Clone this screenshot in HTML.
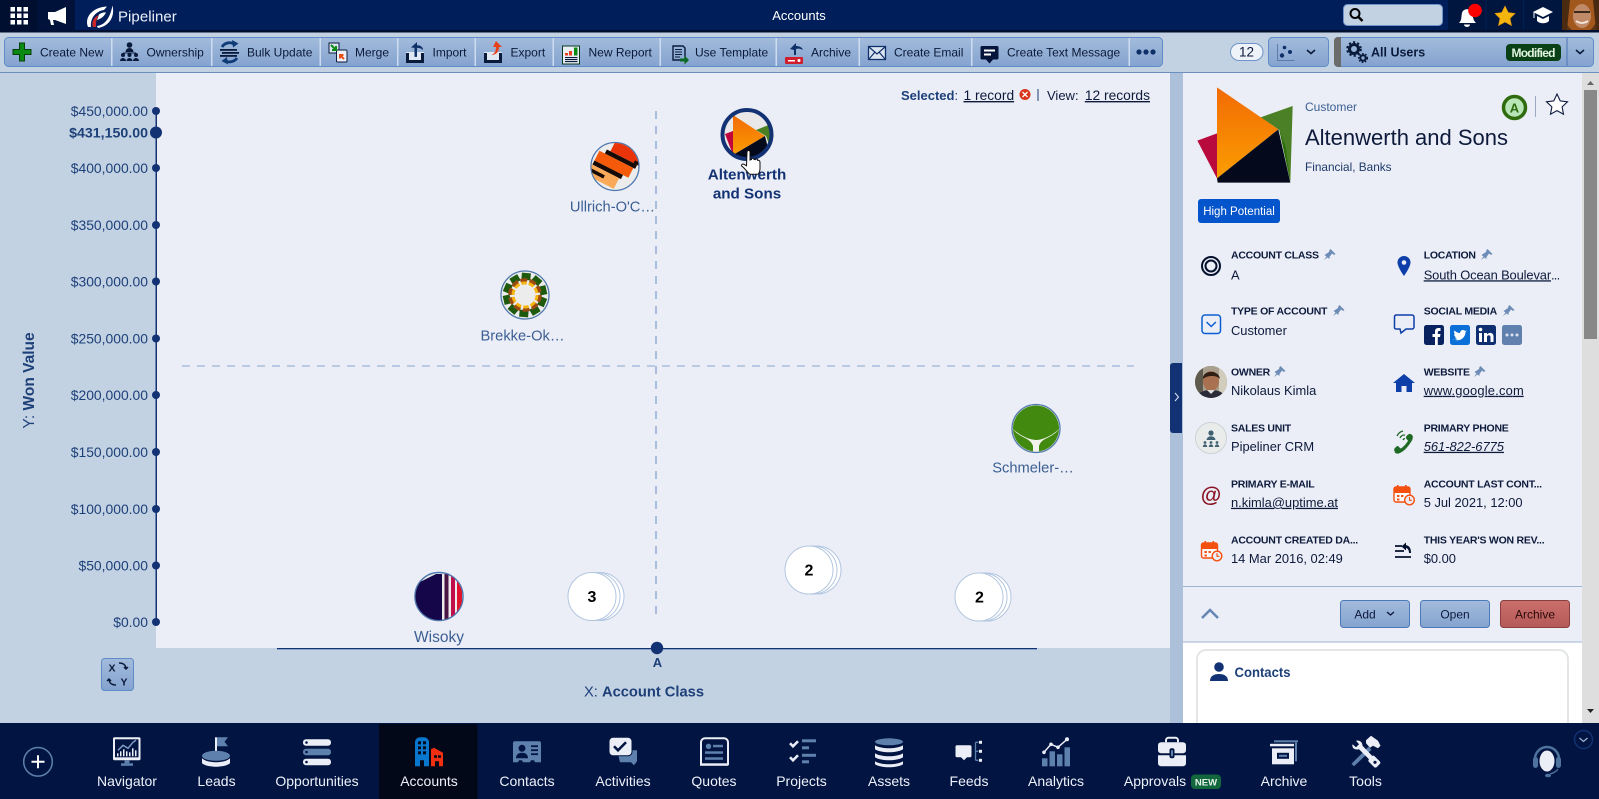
<!DOCTYPE html>
<html lang="en"><head><meta charset="utf-8"><title>Accounts</title>
<style>
html,body{margin:0;padding:0;width:1599px;height:799px;overflow:hidden;background:#c3d2e3}
svg{display:block;font-family:"Liberation Sans",Arial,sans-serif}
.tb{font-size:12px;fill:#0b1a38}
.ax{font-size:13.9px;fill:#1d4079;text-anchor:end}
.bl{font-size:14.7px;fill:#3c5f94;text-anchor:middle}
.lb{font-size:10.5px;font-weight:bold;fill:#0d1a3c;letter-spacing:-.25px}
.vl{font-size:12.9px;fill:#0d1a3c}
.nv{font-size:14px;fill:#edf1f9;text-anchor:middle}
.w{fill:#ebeef6}.b{fill:#5e80ad}.d{fill:#021441}
</style></head><body>
<svg width="1599" height="799" viewBox="0 0 1599 799" xmlns="http://www.w3.org/2000/svg">
<defs>
<linearGradient id="g" x1="0" y1="0" x2="0" y2="1"><stop offset="0" stop-color="#a3bbdc"/><stop offset="1" stop-color="#84a3cf"/></linearGradient>
<linearGradient id="r" x1="0" y1="0" x2="0" y2="1"><stop offset="0" stop-color="#cb6f6c"/><stop offset="1" stop-color="#b45a58"/></linearGradient>
<linearGradient id="o" x1="0" y1="0" x2="0" y2="1"><stop offset="0" stop-color="#f26a05"/><stop offset="1" stop-color="#fb9e00"/></linearGradient>
<g id="pin"><path d="M3 -5 L8 0 L6.500 1 L4.500 -.5 L2 3 L2 5 L0 3.500 L-3.500 6 L-1 2.500 L-3 1 L-1.500 0 L1.500 -2 L2 -4Z" fill="#6d8cb7"/></g>
<g id="cal"><rect x="0" y="2" width="16" height="15" rx="2" fill="#fbfbfb" stroke="#f4500f" stroke-width="1.400"/><rect x="0" y="2" width="16" height="6" fill="#f4500f"/><rect x="3" y="0" width="1.600" height="4" fill="#f4500f"/><rect x="11" y="0" width="1.600" height="4" fill="#f4500f"/><rect x="3" y="10" width="2.400" height="2" fill="#f4500f"/><rect x="7" y="10" width="2.400" height="2" fill="#f4500f"/><rect x="3" y="13.500" width="2.400" height="2" fill="#f4500f"/><circle cx="15.500" cy="15" r="4.800" fill="#ebeef6" stroke="#f4500f" stroke-width="1.400"/><path d="M15.500 12v3.300h2.400" fill="none" stroke="#f4500f" stroke-width="1.100"/></g>
<clipPath id="c1"><circle cx="747" cy="134.500" r="24"/></clipPath>
<clipPath id="c2"><circle cx="615" cy="166.500" r="23.500"/></clipPath>
<clipPath id="c3"><circle cx="439" cy="596.500" r="23.500"/></clipPath>
<clipPath id="c4"><circle cx="1036" cy="428.500" r="23"/></clipPath>
<clipPath id="c5"><circle cx="1211" cy="382" r="16"/></clipPath>
<clipPath id="c6"><rect x="1562" y="0" width="37" height="30"/></clipPath>
</defs>

<!-- backgrounds -->
<rect width="1599" height="799" fill="#c3d2e3"/>
<rect x="156" y="73" width="1014" height="575" fill="#ebeef6"/>
<rect x="1170" y="73" width="13" height="650" fill="#adc0d9"/>
<rect x="1183" y="73" width="399" height="569" fill="#ebeef6"/>
<rect x="1183" y="642" width="399" height="81" fill="#fff"/>
<rect x="1582" y="73" width="17" height="650" fill="#dedede"/>
<rect x="1584" y="90" width="13" height="249" fill="#888"/>
<path d="M1587 85l3.500-4 3.500 4z" fill="#666"/><path d="M1587 709l3.500 4 3.500-4z" fill="#222"/>

<!-- top bar -->
<rect width="1599" height="31" fill="#001e5a"/><rect y="30" width="1599" height="2.500" fill="#01102e"/>
<rect width="75" height="31" fill="#00123a"/><rect width="37" height="31" fill="#000f30"/>
<g fill="#fff"><rect x="10.500" y="7" width="4.500" height="4.500"/><rect x="17" y="7" width="4.500" height="4.500"/><rect x="23.500" y="7" width="4.500" height="4.500"/><rect x="10.500" y="13.500" width="4.500" height="4.500"/><rect x="17" y="13.500" width="4.500" height="4.500"/><rect x="23.500" y="13.500" width="4.500" height="4.500"/><rect x="10.500" y="20" width="4.500" height="4.500"/><rect x="17" y="20" width="4.500" height="4.500"/><rect x="23.500" y="20" width="4.500" height="4.500"/></g>
<path d="M48 12 L55 12 L66 7 V24 L55 20 L53 20 L54 25 L51 25 L50 20 L48 19Z" fill="#fff"/>
<path d="M88 27C84 17 93 7 107 6.500L104 10C96 11 90 18 91 27Z" fill="#fff"/>
<path d="M97 26C105 25 110 18 112.500 5.500C115 16 110 26 98 28Z" fill="#fff"/>
<path d="M97 20C100 19 104 17 106 12.500C104 12 101 13 99 14.500Z" fill="#fff"/>
<path d="M93 27C91 22 94 17 99 15C96 19 96 23 96 27Z" fill="#c8262a"/>
<text x="118" y="21.500" font-size="15" letter-spacing=".05" fill="#eef2fa">Pipeliner</text>
<text x="799" y="20" font-size="13" fill="#fff" text-anchor="middle">Accounts</text>
<rect x="1343.500" y="4.500" width="99" height="21" rx="4" fill="#c3d2e3" stroke="#6f94c9"/>
<circle cx="1355" cy="13.500" r="4.500" fill="none" stroke="#000" stroke-width="2"/><path d="M1358.500 17l4 4" stroke="#000" stroke-width="2.500"/>
<rect x="1448" width="151" height="30" fill="#00163f"/><rect x="1485.500" width="1" height="30" fill="#012055"/><rect x="1523" width="1" height="30" fill="#012055"/>
<path d="M1459 23 C1462 20 1461 17 1462 13 C1463 8 1471 8 1472 13 C1473 17 1473 20 1476 23Z" fill="#fff"/><path d="M1464 24.500h6a3 2.500 0 0 1-6 0z" fill="#fff"/>
<circle cx="1475" cy="10.500" r="6.800" fill="#f00"/>
<path d="M1505 6 L1508.200 12.500 L1515 13.500 L1510 18.400 L1511.500 25.500 L1505 22 L1498.500 25.500 L1500 18.400 L1495 13.500 L1501.800 12.500Z" fill="#f6b40e" stroke="#e39a0a" stroke-width=".6"/>
<path d="M1543 7 L1553 12 L1543 17 L1533 12Z M1537 16 L1543 19 L1549 16 V21 C1546 24 1540 24 1537 21Z" fill="#fff"/><rect x="1533.500" y="12" width="1" height="6" fill="#fff"/>
<g clip-path="url(#c6)"><rect x="1562" width="37" height="30" fill="#5a3416"/><ellipse cx="1581" cy="13" rx="17" ry="20" fill="#a2581c"/><ellipse cx="1582" cy="16" rx="9" ry="12" fill="#c08a68"/><path d="M1574 12h6M1584 12h6M1580 12h4" stroke="#2a1a10" stroke-width="1.800"/><path d="M1576 21q6 4 12 0" stroke="#f4e6dc" stroke-width="1.800" fill="none"/><path d="M1562 0h8l-3 30h-5zM1593 0h6v30h-3z" fill="#4a2a10"/></g>

<!-- toolbar -->
<rect y="72" width="1599" height="1" fill="#6d8fbf"/>
<rect x="4.500" y="37.500" width="1158" height="29" rx="4" fill="url(#g)" stroke="#5f8cc6"/>
<g fill="#cddcef"><rect x="111" y="38" width="1.500" height="28"/><rect x="211" y="38" width="1.500" height="28"/><rect x="319.500" y="38" width="1.500" height="28"/><rect x="397" y="38" width="1.500" height="28"/><rect x="474.500" y="38" width="1.500" height="28"/><rect x="552.500" y="38" width="1.500" height="28"/><rect x="659.500" y="38" width="1.500" height="28"/><rect x="775.500" y="38" width="1.500" height="28"/><rect x="858.500" y="38" width="1.500" height="28"/><rect x="971" y="38" width="1.500" height="28"/><rect x="1128.500" y="38" width="1.500" height="28"/></g>
<g class="tb">
<text class="tb" x="40" y="56.500">Create New</text><text class="tb" x="146.500" y="56.500">Ownership</text><text class="tb" x="247" y="56.500">Bulk Update</text><text class="tb" x="355" y="56.500">Merge</text><text class="tb" x="432.500" y="56.500">Import</text><text class="tb" x="510.500" y="56.500">Export</text><text class="tb" x="588.500" y="56.500">New Report</text><text class="tb" x="695" y="56.500">Use Template</text><text class="tb" x="811" y="56.500">Archive</text><text class="tb" x="894" y="56.500">Create Email</text><text class="tb" x="1007" y="56.500">Create Text Message</text>
</g>
<path d="M19.500 43h5v6.500h6.500v5h-6.500V61h-5v-6.500H13v-5h6.500z" fill="#0a8a12" stroke="#063f0a"/>
<g fill="#0a1a3a"><circle cx="129.500" cy="45" r="2.800"/><path d="M125.500 52a4 4 0 0 1 8 0z"/><circle cx="123" cy="55" r="2"/><path d="M120 61a3 3 0 0 1 6 0z"/><circle cx="129.500" cy="55" r="2"/><path d="M126.500 61a3 3 0 0 1 6 0z"/><circle cx="136" cy="55" r="2"/><path d="M133 61a3 3 0 0 1 6 0z"/><path d="M123 52.500h13v1h-13z"/></g>
<g fill="none" stroke="#0f3a78" stroke-width="2.800"><path d="M222 47c3-5 10-5.500 13-2"/><path d="M237 58c-3 4.500-10 5-13 2"/></g><path d="M232 40l6.500 3.500-5.500 4zM228 64.500l-6.500-3.500 5.500-4z" fill="#0f3a78"/><g fill="#0a1a3a"><rect x="220" y="49" width="17" height="1.800"/><rect x="222" y="52" width="17" height="1.800"/><rect x="220" y="55" width="17" height="1.800"/></g>
<rect x="329" y="43" width="10" height="10" fill="#dbe5f2" stroke="#0a1a3a"/><rect x="336.500" y="50" width="10.500" height="12" rx="1" fill="#eef2f8" stroke="#0a1a3a"/><path d="M331 45l5 5m0-4v4h-4" stroke="#0a8a12" stroke-width="2" fill="none"/><path d="M344 59l-4-4m0 3.500V55h3.500" stroke="#e8501a" stroke-width="2" fill="none"/>
<rect x="406" y="52" width="18" height="11" fill="#dfe8f3"/><path d="M406 53h3v7h12v-7h3v10h-18z" fill="#0a1a3a"/><path d="M411 47.500l6-5.500v3.200c3.500 0 6 1.500 6 5-2-2-4-2.300-6-2.300v9h-2.500v-9z" fill="#0f2f68"/>
<rect x="484" y="52" width="18" height="11" fill="#dfe8f3"/><path d="M484 53h3v7h12v-7h3v10h-18z" fill="#0a1a3a"/><path d="M496 41l6 6h-3c0 5-3 8-8 8 3-1 5-3 5-8h-3z" fill="#e8401a"/>
<rect x="562.500" y="46" width="17" height="18" fill="#e9eef5" stroke="#0a3a22"/><rect x="565" y="53" width="3" height="2.500" fill="#e8401a"/><rect x="569" y="51" width="3" height="4.500" fill="#e8401a"/><rect x="574" y="47.500" width="3.500" height="8" fill="#0a8a12"/><g fill="#0a1a3a"><rect x="565" y="57" width="12.500" height="1.100"/><rect x="565" y="59" width="12.500" height="1.100"/><rect x="565" y="61" width="12.500" height="1.100"/></g>
<path d="M673 46h10l2 2v12h-12z" fill="none" stroke="#0a1a3a" stroke-width="1.400"/><g fill="#0a1a3a"><rect x="675" y="49" width="7" height="1"/><rect x="675" y="51.500" width="7" height="1"/><rect x="675" y="54" width="7" height="1"/><rect x="675" y="56.500" width="5" height="1"/></g><path d="M680 58.500h4.500v-3l4.500 4.500-4.500 4.500v-3H680z" fill="#0a6a22"/>
<rect x="785" y="57" width="18" height="7" rx="1" fill="#d11e2c"/><rect x="788" y="60" width="7" height="1.500" fill="#fff"/><circle cx="799" cy="60.500" r="1.500" fill="#fff"/><path d="M790 49l6-6v3c3 0 6 1 7 4-2-1-4-2-7-1v6h-2v-5z" fill="#0f2f68"/>
<rect x="868.500" y="46.500" width="17" height="13" fill="#dbe5f2" stroke="#0f2f68" stroke-width="1.300"/><path d="M869 47l8 7 8-7M869 59l6-7M885 59l-6-7" fill="none" stroke="#0f2f68" stroke-width="1.200"/>
<path d="M982 46h15a1.500 1.500 0 0 1 1.500 1.500V58a1.500 1.500 0 0 1-1.500 1.500h-4l-3.500 4-3.500-4H982a1.500 1.500 0 0 1-1.500-1.500V47.500A1.500 1.500 0 0 1 982 46z" fill="#04143a"/><rect x="984" y="49.500" width="11" height="2" fill="#fff"/><rect x="984" y="53.500" width="7" height="2" fill="#fff"/>
<g fill="#0f2f68"><circle cx="1139" cy="52" r="2.600"/><circle cx="1146" cy="52" r="2.600"/><circle cx="1153" cy="52" r="2.600"/></g>
<rect x="1230.500" y="43.500" width="32.500" height="17" rx="8.500" fill="#eef3fa" stroke="#6f94c9"/><text x="1246.500" y="56.500" font-size="13.500" fill="#0d1a3c" text-anchor="middle">12</text>
<rect x="1268.500" y="37.500" width="60" height="29" rx="4" fill="url(#g)" stroke="#5f8cc6"/>
<path d="M1277.500 44v16.500h17" fill="none" stroke="#5a7cab"/><circle cx="1282" cy="55.500" r="2.200" fill="#0f2f68"/><circle cx="1284.500" cy="47.500" r="1.800" fill="#0f2f68"/><circle cx="1290" cy="52" r="2" fill="#0f2f68"/>
<path d="M1307 50l4 3.500 4-3.500" fill="none" stroke="#0a1a3a" stroke-width="1.600"/>
<rect x="1334.500" y="37.500" width="259" height="29" rx="4" fill="url(#g)" stroke="#5f8cc6"/><path d="M1341 37v30h-3a4 4 0 0 1-4-4V41a4 4 0 0 1 4-4z" fill="#6b6b6b"/><rect x="1566.500" y="38" width="1" height="28" fill="#4a76b5"/>
<circle cx="1354" cy="49" r="4.500" fill="none" stroke="#0a1a3a" stroke-width="3"/><circle cx="1354" cy="49" r="6.800" fill="none" stroke="#0a1a3a" stroke-width="2" stroke-dasharray="2.200 2.200"/>
<circle cx="1363" cy="58" r="2.700" fill="none" stroke="#0a1a3a" stroke-width="2"/><circle cx="1363" cy="58" r="4.300" fill="none" stroke="#0a1a3a" stroke-width="1.500" stroke-dasharray="1.600 1.600"/>
<text x="1371" y="56.500" font-size="12.500" font-weight="bold" fill="#0a1a3a">All Users</text>
<rect x="1506" y="44" width="55" height="17" rx="4" fill="#0a4016"/><text x="1533.500" y="56.800" font-size="12" font-weight="bold" fill="#dff3df" text-anchor="middle" textLength="44">Modified</text>
<path d="M1576 50l4 3.500 4-3.500" fill="none" stroke="#0a1a3a" stroke-width="1.600"/>

<!-- axis -->
<rect x="155.500" y="111" width="1.500" height="511" fill="#123274"/>
<g fill="#123274"><circle cx="156" cy="111" r="4"/><circle cx="156" cy="132.500" r="6"/><circle cx="156" cy="168" r="4"/><circle cx="156" cy="225" r="4"/><circle cx="156" cy="281.500" r="4"/><circle cx="156" cy="338.500" r="4"/><circle cx="156" cy="395" r="4"/><circle cx="156" cy="452" r="4"/><circle cx="156" cy="509" r="4"/><circle cx="156" cy="565.500" r="4"/><circle cx="156" cy="622" r="4"/></g>
<text class="ax" x="148" y="116">$450,000.00</text>
<text x="148" y="137.500" font-size="14.200" font-weight="bold" fill="#1d4079" text-anchor="end">$431,150.00</text>
<text class="ax" x="148" y="173">$400,000.00</text><text class="ax" x="148" y="230">$350,000.00</text><text class="ax" x="148" y="286.500">$300,000.00</text><text class="ax" x="148" y="343.500">$250,000.00</text><text class="ax" x="148" y="400">$200,000.00</text><text class="ax" x="148" y="457">$150,000.00</text><text class="ax" x="148" y="514">$100,000.00</text><text class="ax" x="148" y="570.500">$50,000.00</text><text class="ax" x="148" y="627">$0.00</text>
<text transform="translate(34 380.500) rotate(-90)" font-size="15.500" fill="#1d4079" text-anchor="middle">Y: <tspan font-weight="bold">Won Value</tspan></text>
<path d="M656 111V620" stroke="#a9bedd" stroke-width="2" stroke-dasharray="8 7"/>
<path d="M182 366H1134" stroke="#a9bedd" stroke-width="1.500" stroke-dasharray="8 7"/>
<rect x="277" y="648" width="760" height="1.300" fill="#123274"/><circle cx="657" cy="648" r="6.200" fill="#123274"/>
<text x="657.500" y="667" font-size="13" font-weight="bold" fill="#1d4079" text-anchor="middle">A</text>
<text x="584" y="696.500" font-size="14.700" fill="#1d4079">X: <tspan font-weight="bold">Account Class</tspan></text>
<rect x="101.500" y="658.500" width="32" height="32" rx="3" fill="url(#g)" stroke="#5f8cc6"/>
<text x="112" y="671.500" font-size="10.500" font-weight="bold" fill="#0a1a3a" text-anchor="middle">X</text><text x="124" y="685.500" font-size="10.500" font-weight="bold" fill="#0a1a3a" text-anchor="middle">Y</text>
<path d="M119 663c4 0 7 2 7 6m-2-2l2 2 2-2M116 685c-4 0-7-2-7-6m2 2l-2-2-2 2" fill="none" stroke="#0a1a3a" stroke-width="1.500"/>

<!-- selected -->
<text x="901" y="100" font-size="13" fill="#1d4079"><tspan font-weight="bold">Selected</tspan>: </text>
<text x="963.500" y="100" font-size="13.800" fill="#0d1a3c" text-decoration="underline">1 record</text>
<circle cx="1025" cy="94.500" r="5.500" fill="#d9341c"/><path d="M1022.500 92l5 5m0-5l-5 5" stroke="#fff" stroke-width="1.300"/>
<rect x="1037.500" y="89" width="1" height="12" fill="#1d4079"/>
<text x="1047" y="100" font-size="13" fill="#0d1a3c">View:</text>
<text x="1150" y="100" font-size="13.800" fill="#0d1a3c" text-decoration="underline" text-anchor="end">12 records</text>

<!-- bubbles -->
<circle cx="615" cy="166.500" r="24" fill="#ececec" stroke="#4f78ae" stroke-width="1.300"/>
<g clip-path="url(#c2)"><g transform="rotate(27 615 166.500)">
<rect x="604" y="143" width="32" height="12" fill="#e9340a"/>
<rect x="600" y="155" width="34" height="4.500" fill="#150a06"/>
<rect x="594" y="159.500" width="38" height="11" fill="#f45a0a"/>
<rect x="594" y="170.500" width="32" height="4.500" fill="#150a06"/>
<rect x="590" y="175" width="34" height="12" fill="#f9a957"/>
<rect x="594" y="179" width="16" height="3.500" fill="#150a06"/>
<rect x="630" y="152" width="8" height="3" fill="#150a06"/>
</g></g>
<text class="bl" x="612.500" y="211.500">Ullrich-O'C…</text>
<circle cx="747" cy="134.500" r="24" fill="#e8e8e8"/>
<g clip-path="url(#c1)"><path d="M733 115L765 136 733 155z" fill="url(#o)"/><path d="M725 134L733 131V155z" fill="#c0063c"/><path d="M756 130L771 124V150L766 136z" fill="#4a7f22"/><path d="M765 136L771 160H733V155z" fill="#040a1c"/></g>
<circle cx="747" cy="134.500" r="24.500" fill="none" stroke="#123274" stroke-width="4"/>
<text x="747" y="179.500" font-size="15.200" font-weight="bold" fill="#123274" text-anchor="middle">Altenwerth</text>
<text x="747" y="198.500" font-size="15.200" font-weight="bold" fill="#123274" text-anchor="middle">and Sons</text>
<path d="M747 152a1.500 1.500 0 0 1 3 0v8l1.500-.5v-.5a1.300 1.300 0 0 1 2.500.5l1.300.2a1.200 1.200 0 0 1 2.300.6c2-.5 2.500 1 2.400 3v5c0 3-1 5-2 6h-8c-2-1-5-6-8-8-1-1 0-3 2-2l2.500 1.500z" fill="#fff" stroke="#111" stroke-width="1"/>
<circle cx="525" cy="295" r="24" fill="#ececec" stroke="#4f78ae" stroke-width="1.300"/>
<g transform="translate(525 295)">
<g fill="#1e5a0e"><rect x="-5" y="-22" width="9" height="7" transform="rotate(5)"/><rect x="-5" y="-22" width="9" height="7" transform="rotate(41)"/><rect x="-5" y="-22" width="9" height="7" transform="rotate(77)"/><rect x="-5" y="-22" width="9" height="7" transform="rotate(113)"/><rect x="-5" y="-22" width="9" height="7" transform="rotate(149)"/><rect x="-5" y="-22" width="9" height="7" transform="rotate(185)"/><rect x="-5" y="-22" width="9" height="7" transform="rotate(221)"/><rect x="-5" y="-22" width="9" height="7" transform="rotate(257)"/><rect x="-5" y="-22" width="9" height="7" transform="rotate(293)"/><rect x="-5" y="-22" width="9" height="7" transform="rotate(329)"/></g>
<circle r="15" fill="none" stroke="#9c4a14" stroke-width="3.500" stroke-dasharray="7 2.400"/><circle r="12" fill="none" stroke="#f6b40e" stroke-width="3" stroke-dasharray="5.500 2"/><circle r="10.500" fill="#ececec"/>
</g>
<text class="bl" x="522.500" y="340.500">Brekke-Ok…</text>
<circle cx="1036" cy="428.500" r="24" fill="#ececec" stroke="#4f78ae" stroke-width="1.300"/>
<g clip-path="url(#c4)"><rect x="1010" y="404" width="52" height="50" fill="#42890f"/><path d="M1012 428C1020 439 1030 437 1033 446V454H1039V446C1042 437 1052 439 1060 428C1052 436 1042 440 1036 440C1030 440 1020 436 1012 428Z" fill="#f1f3ec"/></g>
<text class="bl" x="1033" y="472.500">Schmeler-…</text>
<circle cx="439" cy="596.500" r="24" fill="#ececec" stroke="#4f78ae" stroke-width="1.500"/>
<g clip-path="url(#c3)"><path d="M414 585l22-11 6 0v46h-28z" fill="#15064a"/><rect x="444.500" y="574" width="4" height="46" fill="#4a1545"/><rect x="451" y="576" width="4" height="44" fill="#c00f4a"/><rect x="457" y="580" width="5" height="40" fill="#e0132e"/></g>
<text class="bl" x="439" y="642" font-size="15.500" style="font-size:15.500px">Wisoky</text>
<g fill="#fff" stroke="#b3c6e0" stroke-width="1"><circle cx="600" cy="596.500" r="24"/><circle cx="596" cy="596.500" r="24"/><circle cx="592" cy="596.500" r="24"/><circle cx="817" cy="570" r="24"/><circle cx="813" cy="570" r="24"/><circle cx="809" cy="570" r="24"/><circle cx="987" cy="597" r="24"/><circle cx="983" cy="597" r="24"/><circle cx="979" cy="597" r="24"/></g>
<g font-size="16" font-weight="bold" fill="#000" text-anchor="middle"><text x="592" y="602">3</text><text x="809" y="575.500">2</text><text x="979.500" y="602.500">2</text></g>

<!-- panel header -->
<svg x="1120" y="0" width="479" height="240" viewBox="0 0 1437 720">
<path d="M232 422L291 400V535Z" fill="#b80a3c"/><path d="M422 352L518 318 511 545 478 390Z" fill="#4b8026"/><path d="M478 390L511 545 497 440Z" fill="#2f6d0a"/><path d="M291 262L475 388 291 535Z" fill="url(#o)"/><path d="M475 388L511 548H293L291 535Z" fill="#040a1c"/>
</svg>
<text x="1305" y="111" font-size="12" fill="#3c5f94">Customer</text>
<text x="1305" y="145" font-size="22" fill="#0d1a3c">Altenwerth and Sons</text>
<text x="1305" y="171" font-size="11.800" fill="#1d3a6b">Financial, Banks</text>
<rect x="1198" y="199" width="82" height="24" rx="3" fill="#0454cb"/><text x="1239" y="215" font-size="11.500" fill="#fff" text-anchor="middle">High Potential</text>
<circle cx="1514.500" cy="107.500" r="11" fill="#b9e6b8" stroke="#2f6b0f" stroke-width="3.500"/><text x="1514.500" y="112.500" font-size="13" font-weight="bold" fill="#2f6b0f" text-anchor="middle">A</text>
<rect x="1535" y="96" width="1" height="21" fill="#9aa9bf"/>
<path d="M1557 94l3.200 6.900 7.300.9-5.400 5.100 1.400 7.300-6.500-3.600-6.500 3.600 1.400-7.300-5.400-5.100 7.300-.9z" fill="#fff" stroke="#0d1a3c" stroke-width="1.100"/>

<!-- toggle -->
<path d="M1182 363h-9a3 3 0 0 0-3 3v64a3 3 0 0 0 3 3h9z" fill="#123274"/><path d="M1175 393l3.500 4-3.500 4" fill="none" stroke="#dfe7f3"/>

<!-- details -->
<text class="lb" x="1231" y="258.500">ACCOUNT CLASS</text><use href="#pin" x="1327.500" y="254"/><text class="vl" x="1231" y="279.300">A</text>
<text class="lb" x="1423.700" y="258.500">LOCATION</text><use href="#pin" x="1484.500" y="254"/><text class="vl" x="1423.700" y="279.300"><tspan text-decoration="underline" letter-spacing="-.12">South Ocean Boulevar</tspan><tspan letter-spacing="-.8">...</tspan></text>
<text class="lb" x="1231" y="314.500">TYPE OF ACCOUNT</text><use href="#pin" x="1336.500" y="310"/><text class="vl" x="1231" y="334.800">Customer</text>
<text class="lb" x="1423.700" y="314.500">SOCIAL MEDIA</text><use href="#pin" x="1506.500" y="310"/>
<text class="lb" x="1231" y="375.500">OWNER</text><use href="#pin" x="1277.500" y="371"/><text class="vl" x="1231" y="394.800">Nikolaus Kimla</text>
<text class="lb" x="1423.700" y="375.500">WEBSITE</text><use href="#pin" x="1477.500" y="371"/><text class="vl" x="1423.700" y="394.800" text-decoration="underline" textLength="100">www.google.com</text>
<text class="lb" x="1231" y="431.500">SALES UNIT</text><text class="vl" x="1231" y="450.800">Pipeliner CRM</text>
<text class="lb" x="1423.700" y="431.500">PRIMARY PHONE</text><text class="vl" x="1423.700" y="450.800" font-style="italic" text-decoration="underline">561-822-6775</text>
<text class="lb" x="1231" y="487.500">PRIMARY E-MAIL</text><text class="vl" x="1231" y="506.800" text-decoration="underline">n.kimla@uptime.at</text>
<text class="lb" x="1423.700" y="487.500">ACCOUNT LAST CONT...</text><text class="vl" x="1423.700" y="506.800">5 Jul 2021, 12:00</text>
<text class="lb" x="1231" y="543.500">ACCOUNT CREATED DA...</text><text class="vl" x="1231" y="562.800">14 Mar 2016, 02:49</text>
<text class="lb" x="1423.700" y="543.500">THIS YEAR'S WON REV...</text><text class="vl" x="1423.700" y="562.800">$0.00</text>
<!-- detail icons -->
<circle cx="1211" cy="266" r="9" fill="none" stroke="#05102e" stroke-width="2"/><circle cx="1211" cy="266" r="5.500" fill="none" stroke="#05102e" stroke-width="2"/>
<path d="M1404 256a6.500 6.500 0 0 1 6.500 6.500c0 4.500-6.500 13.500-6.500 13.500s-6.500-9-6.500-13.500a6.500 6.500 0 0 1 6.500-6.500z" fill="#0e3fa8"/><circle cx="1404" cy="262.500" r="2.300" fill="#ebeef6"/>
<rect x="1202" y="315" width="18.500" height="18.500" rx="3" fill="none" stroke="#0b5ed2" stroke-width="1.500"/><path d="M1206.500 322l4.700 4.500 4.700-4.500" fill="none" stroke="#0b5ed2" stroke-width="1.500"/>
<path d="M1396 315h16a2 2 0 0 1 2 2v10a2 2 0 0 1-2 2h-6l-5 4-1-4h-4a1.500 1.500 0 0 1-1.500-2v-10a2 2 0 0 1 1.500-2z" fill="none" stroke="#0e3fa8" stroke-width="1.500"/>
<g><rect x="1424" y="325" width="20" height="20" rx="2.500" fill="#08215f"/><path d="M1435 345v-8h-2.500v-3h2.500v-2.500c0-2.500 1.500-3.500 3.500-3.500h2v3h-1.500c-1 0-1.200.5-1.200 1.300V334h2.700l-.5 3h-2.200v8z" fill="#fff"/>
<rect x="1450" y="325" width="20" height="20" rx="2.500" fill="#0a6fd6"/><path d="M1453 339c2 1.500 7 2 10-1 2-2 2.500-4.500 2.500-6l1.500-1.500-2 .5c-1-1.500-4.500-1.500-5 2-2 0-4-1-5.500-2.500-.8 1.500-.3 3 .8 4l-1.300-.3c0 1.500 1 2.500 2.300 3l-1.300.1c.3 1 1.300 1.700 2.500 1.800-1.300 .7-2.700 .8-4.500 .4z" fill="#fff"/>
<rect x="1476" y="325" width="20" height="20" rx="2.500" fill="#0d2f70"/><rect x="1479" y="333" width="3" height="9" fill="#fff"/><circle cx="1480.500" cy="329.500" r="1.800" fill="#fff"/><path d="M1484 333h3v1.500c1.500-2.500 6.500-2.500 6.500 2V342h-3v-5c0-2.500-3.500-2.300-3.500 0v5h-3z" fill="#fff"/>
<rect x="1502" y="325" width="20" height="20" rx="2.500" fill="#6080ad"/><circle cx="1507" cy="335" r="1.500" fill="#dbe5f2"/><circle cx="1512" cy="335" r="1.500" fill="#dbe5f2"/><circle cx="1517" cy="335" r="1.500" fill="#dbe5f2"/></g>
<circle cx="1211" cy="382" r="16" fill="#8a7a6a"/>
<g clip-path="url(#c5)"><rect x="1195" y="366" width="32" height="32" fill="#a89f8e"/><rect x="1195" y="366" width="8" height="32" fill="#5e5a4e"/><rect x="1219" y="366" width="8" height="32" fill="#d2ccbc"/><ellipse cx="1211" cy="381" rx="8" ry="10" fill="#a9714f"/><path d="M1203 379c-1-9 16-10 17 0-3-4-13-4-17 0z" fill="#2e1e14"/><path d="M1197 398c1-6 7-8 14-8s13 2 14 8z" fill="#2a2a38"/><path d="M1207 390l4 4 4-4z" fill="#dcdcdc"/></g>
<path d="M1404 374l11 9h-3v9h-5.500v-6h-5v6H1396v-9h-3z" fill="#0e3fa8"/>
<circle cx="1211" cy="438" r="15.500" fill="#eaecec" stroke="#ccd3d4" stroke-width="1"/><g fill="#3f6172"><circle cx="1211" cy="433" r="2.600"/><path d="M1206.500 440a4.500 3.800 0 0 1 9 0z"/><circle cx="1205" cy="442.500" r="1.400"/><path d="M1202.800 447a2.200 2.800 0 0 1 4.400 0z"/><circle cx="1211" cy="442.500" r="1.400"/><path d="M1208.800 447a2.200 2.800 0 0 1 4.400 0z"/><circle cx="1217" cy="442.500" r="1.400"/><path d="M1214.800 447a2.200 2.800 0 0 1 4.400 0z"/></g>
<path d="M1395 452c-2-3 0-4 1.500-5.500 1-1 2-.5 3 1l1 1c2-.5 7-6 7.500-8l-1.500-1.500c-1-1.500-.5-2.500.5-3.500 1.500-1.500 3-2.500 5-.5 1.500 1.500 1 4-1 7-3.500 5.500-7 9-11 11-2.500 1-4 1-5.500-1z" fill="#1e6a25"/><path d="M1400 438a5 5 0 0 1 5-3M1397 436a9 9 0 0 1 6-5M1403 440a2.500 2.500 0 0 1 2-1.500" fill="none" stroke="#1e6a25" stroke-width="1.300"/>
<text x="1211" y="502" font-size="21" font-weight="bold" fill="#8a1525" text-anchor="middle">@</text>
<use href="#cal" x="1394" y="485"/><use href="#cal" x="1201.500" y="541"/>
<path d="M1395 546h7M1395 551h9M1395 557h16" stroke="#05102e" stroke-width="1.700"/><path d="M1411 553c0-4-1-7-5-8v-2.500l-4.500 4 4.500 4v-2.500c2 .5 3 2.500 3 5z" fill="#05102e"/>

<!-- actions -->
<rect x="1183" y="586" width="399" height="1" fill="#9cb5d3"/><rect x="1183" y="641.500" width="399" height="1" fill="#9cb5d3"/>
<path d="M1202 618l8-8 8 8" fill="none" stroke="#6486b4" stroke-width="2.500"/>
<rect x="1340.500" y="600.500" width="69" height="27" rx="3" fill="url(#g)" stroke="#4a7ab8"/><text x="1365" y="618.500" font-size="12" fill="#0d1a3c" text-anchor="middle">Add</text><path d="M1387 612l3.500 3 3.500-3" fill="none" stroke="#0d1a3c" stroke-width="1.400"/>
<rect x="1420.500" y="600.500" width="69" height="27" rx="3" fill="url(#g)" stroke="#4a7ab8"/><text x="1455" y="618.500" font-size="12" fill="#0d1a3c" text-anchor="middle">Open</text>
<rect x="1500.500" y="600.500" width="69" height="27" rx="3" fill="url(#r)" stroke="#8a3f3f"/><text x="1535" y="618.500" font-size="12" fill="#2a0a0a" text-anchor="middle">Archive</text>
<path d="M1197 723V659a9 9 0 0 1 9-9h353a9 9 0 0 1 9 9v64" fill="#fff" stroke="#e4e6e6" stroke-width="2"/>
<circle cx="1219" cy="667" r="4.800" fill="#123274"/><path d="M1210 681c0-5 4-7 9-7s9 2 9 7z" fill="#123274"/>
<text x="1234.500" y="677" font-size="14" font-weight="bold" fill="#1d4079" textLength="56" lengthAdjust="spacingAndGlyphs">Contacts</text>

<!-- bottom nav -->
<rect y="723" width="1599" height="76" fill="#021441"/>
<rect x="379" y="724" width="98.500" height="75" fill="#020818"/>
<text class="nv" x="127" y="786">Navigator</text><text class="nv" x="216.500" y="786">Leads</text><text class="nv" x="317" y="786">Opportunities</text><text class="nv" x="429" y="786">Accounts</text><text class="nv" x="527" y="786">Contacts</text><text class="nv" x="623" y="786">Activities</text><text class="nv" x="714" y="786">Quotes</text><text class="nv" x="801.500" y="786">Projects</text><text class="nv" x="889" y="786">Assets</text><text class="nv" x="969" y="786">Feeds</text><text class="nv" x="1056" y="786">Analytics</text><text class="nv" x="1155" y="786">Approvals</text><text class="nv" x="1284" y="786">Archive</text><text class="nv" x="1365.500" y="786">Tools</text>
<rect x="1191" y="774.500" width="30" height="14.500" rx="4" fill="#12673c"/><text x="1206" y="785.500" font-size="9.500" font-weight="bold" fill="#e6f3ea" text-anchor="middle">NEW</text>
<g transform="translate(0 -1.700)">
<circle cx="38" cy="763.500" r="14.300" fill="none" stroke="#5e80ad" stroke-width="1.500"/><path d="M38 757v13M31.500 763.500h13" stroke="#fff" stroke-width="2"/>
<!-- navigator -->
<rect x="113" y="739" width="27.500" height="23" rx="1.500" class="w"/><rect x="115" y="741" width="23.500" height="18" class="d"/><path d="M118 752l5-5 5 3 5-6 3-2" fill="none" stroke="#7f9cc2" stroke-width="1.500"/><g class="w"><rect x="117" y="755" width="1.500" height="3"/><rect x="120" y="753" width="1.500" height="5"/><rect x="123" y="751" width="1.500" height="7"/><rect x="126" y="753" width="1.500" height="5"/><rect x="129" y="754" width="1.500" height="4"/><rect x="132" y="750" width="1.500" height="8"/><rect x="135" y="752" width="1.500" height="6"/></g><rect x="124.500" y="762" width="5" height="3" class="b"/><rect x="121" y="765" width="12" height="2.500" class="b"/>
<!-- leads -->
<rect x="215" y="739" width="2" height="18" class="w"/><path d="M217 739h11l-3.500 4.500 3.500 4.500h-11z" class="b"/><ellipse cx="216" cy="757.500" rx="14" ry="5" class="b"/><path d="M202 760c3 3 9 4 14 4s11-1 14-4v5c-3 2.500-9 3.500-14 3.500s-11-1-14-3.500z" class="w"/>
<!-- opportunities -->
<rect x="303" y="741" width="28" height="6.500" rx="3" class="w"/><rect x="303" y="750.500" width="28" height="6.500" rx="3" class="b"/><rect x="303" y="760.500" width="28" height="6.500" rx="3" class="w"/><circle cx="306.500" cy="744.200" r="1.300" class="d"/><circle cx="306.500" cy="753.700" r="1.300" class="d"/><circle cx="306.500" cy="763.700" r="1.300" class="d"/>
<!-- accounts -->
<path d="M415 768v-24a5 5 0 0 1 5-5h4a5 5 0 0 1 5 5v24h-5v-6h-4v6z" fill="#0a77cf"/><g fill="#020818"><rect x="418" y="743" width="3" height="3"/><rect x="423" y="743" width="3" height="3"/><rect x="418" y="748" width="3" height="3"/><rect x="423" y="748" width="3" height="3"/><rect x="418" y="753" width="3" height="3"/><rect x="423" y="753" width="3" height="3"/></g>
<path d="M431 768v-17l3-1.500 9 5v13.500h-4v-5h-4v5z" fill="#f03010"/><rect x="434" y="757" width="3" height="2.500" fill="#020818"/><rect x="438" y="757" width="3" height="2.500" fill="#020818"/>
<!-- contacts -->
<path d="M515 743h24a2 2 0 0 1 2 2v19h-6l-1-2h-3l-1 2h-7l-1-2h-3l-1 2h-5v-19a2 2 0 0 1 2-2z" class="b"/><circle cx="522" cy="750" r="3.500" class="d"/><path d="M516 760c0-4 3-5.500 6-5.500s6 1.500 6 5.500z" class="d"/><rect x="531" y="747" width="7" height="1.800" class="d"/><rect x="531" y="751" width="7" height="1.800" class="d"/><rect x="531" y="755" width="7" height="1.800" class="d"/>
<!-- activities -->
<path d="M617 753h20v11l-3 4-3-3h-11z" class="b" transform="translate(0 -1)"/><rect x="609" y="739" width="23" height="18.500" rx="4" stroke="#021441" stroke-width="1" class="w"/><path d="M614 748l4 4 8-8" fill="none" stroke="#021441" stroke-width="2.500"/>
<!-- quotes -->
<path d="M701 767v-23a4 4 0 0 1 4-4h19a4 4 0 0 1 4 4v23" fill="none" stroke="#ebeef6" stroke-width="2"/><rect x="700" y="765" width="28" height="2.500" class="w"/><circle cx="708.500" cy="748" r="2.700" class="b"/><rect x="713" y="746.500" width="10" height="2.500" class="b"/><rect x="705" y="753" width="18" height="2.500" class="b"/><rect x="705" y="759" width="18" height="2.500" class="b"/>
<!-- projects -->
<path d="M790 745l3 3 5-5M790 759l3 3 5-5" fill="none" stroke="#ebeef6" stroke-width="2.500"/><rect x="802" y="741" width="14" height="3" class="b"/><rect x="802" y="748" width="7" height="3" class="b"/><rect x="802" y="755.500" width="14" height="3" class="b"/><rect x="802" y="762" width="7" height="3" class="b"/>
<!-- assets -->
<ellipse cx="889" cy="743.500" rx="14" ry="3.500" class="b"/><path d="M875 747c3 2 9 3 14 3s11-1 14-3v4c-3 2-9 3-14 3s-11-1-14-3z" class="w"/><path d="M875 755c3 2 9 3 14 3s11-1 14-3v4c-3 2-9 3-14 3s-11-1-14-3z" class="w"/><path d="M875 763c3 2 9 3 14 3s11-1 14-3v3c-3 2-9 3-14 3s-11-1-14-3z" class="w"/>
<!-- feeds -->
<path d="M957 747h13a1.500 1.500 0 0 1 1.500 1.500v9a1.500 1.500 0 0 1-1.500 1.500h-3l-3 3-3-3h-4a1.500 1.500 0 0 1-1.500-1.500v-9a1.500 1.500 0 0 1 1.500-1.500z" class="w"/><path d="M975.500 744v18M975.500 744h3M975.500 753h3M975.500 762h3" fill="none" stroke="#5e80ad" stroke-width="1.300"/><rect x="979" y="742.500" width="3" height="3" class="w"/><rect x="979" y="751.500" width="3" height="3" class="w"/><rect x="979" y="760.500" width="3" height="3" class="w"/>
<!-- analytics -->
<rect x="1042" y="760" width="5.500" height="8" class="b"/><rect x="1049.500" y="753" width="5.500" height="15" class="b"/><rect x="1057" y="756" width="5.500" height="12" class="b"/><rect x="1064.500" y="749" width="5.500" height="19" class="b"/><path d="M1044 754l7-8 7 3 9-8" fill="none" stroke="#ebeef6" stroke-width="1.500"/><g class="w"><circle cx="1044" cy="754" r="1.800"/><circle cx="1051" cy="746" r="1.800"/><circle cx="1058" cy="749" r="1.800"/><circle cx="1067" cy="741" r="2"/></g>
<!-- approvals -->
<path d="M1166 744v-2a2.500 2.500 0 0 1 2.500-2.500h7a2.500 2.500 0 0 1 2.500 2.500v2" fill="none" stroke="#ebeef6" stroke-width="2"/><rect x="1158" y="744" width="28" height="11" rx="3" class="w"/><path d="M1158 757h28v8a3 3 0 0 1-3 3h-22a3 3 0 0 1-3-3z" class="w"/><rect x="1169.500" y="750" width="5" height="10" rx="2" class="d"/><rect x="1171" y="752" width="2" height="6" class="b"/>
<!-- archive -->
<rect x="1274" y="742" width="24" height="2" class="b"/><rect x="1295" y="744" width="2" height="19" class="b"/><rect x="1270" y="745.500" width="24" height="2.500" class="w"/><rect x="1272" y="750" width="22" height="16" class="w"/><rect x="1277" y="754.500" width="12" height="6" class="d"/><rect x="1279" y="756.500" width="8" height="2" class="b"/>
<!-- tools -->
<path d="M1354 768l-2.500-2.500 17-17 3 3z" class="b"/><path d="M1352.500 746l3.500 3 3-3-3-3.500c3-1 6.500 1 6.500 5l12 12.500-3 3.500-12.500-12.500c-4 1-7.500-1-6.500-5z" class="w"/><rect x="1370" y="758" width="8" height="11" rx="2" transform="rotate(-45 1374 763)" class="w"/><path d="M1366 742l5-4.500 7 5 2.500 5-2.500 2.500-5-2.500-3 2-4-4.500z" class="w"/><circle cx="1375" cy="764" r="1.600" class="d"/>
</g>
<!-- headset -->
<path d="M1535 765v-6a12 12 0 0 1 24 0v6" fill="none" stroke="#4f739f" stroke-width="2.500"/><rect x="1533" y="757" width="5" height="11" rx="2.500" fill="#4f739f"/><rect x="1556" y="757" width="5" height="11" rx="2.500" fill="#4f739f"/><ellipse cx="1547" cy="761" rx="7.500" ry="10.500" class="w"/><path d="M1558 769c-2 3-5 4-8 5" fill="none" stroke="#4f739f" stroke-width="1.300"/><ellipse cx="1548" cy="775.500" rx="3" ry="1.800" fill="#4f739f"/>
<circle cx="1583.500" cy="739.500" r="9" fill="none" stroke="#123274" stroke-width="1.500"/><path d="M1579.500 738l4 3.500 4-3.500" fill="none" stroke="#9cb5d3" stroke-width="1.200"/>
</svg>
</body></html>
